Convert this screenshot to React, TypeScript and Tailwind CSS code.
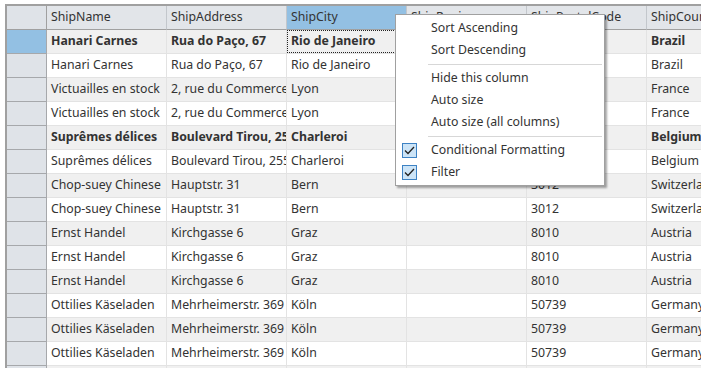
import React from "react";

const cols = ["ShipName", "ShipAddress", "ShipCity", "ShipRegion", "ShipPostalCode", "ShipCountry"];

type Row = { v: string[]; bold?: boolean };
const rows: Row[] = [
  { v: ["Hanari Carnes", "Rua do Paço, 67", "Rio de Janeiro", "", "", "Brazil"], bold: true },
  { v: ["Hanari Carnes", "Rua do Paço, 67", "Rio de Janeiro", "", "", "Brazil"] },
  { v: ["Victuailles en stock", "2, rue du Commerce", "Lyon", "", "", "France"] },
  { v: ["Victuailles en stock", "2, rue du Commerce", "Lyon", "", "", "France"] },
  { v: ["Suprêmes délices", "Boulevard Tirou, 255", "Charleroi", "", "", "Belgium"], bold: true },
  { v: ["Suprêmes délices", "Boulevard Tirou, 255", "Charleroi", "", "", "Belgium"] },
  { v: ["Chop-suey Chinese", "Hauptstr. 31", "Bern", "", "3012", "Switzerland"] },
  { v: ["Chop-suey Chinese", "Hauptstr. 31", "Bern", "", "3012", "Switzerland"] },
  { v: ["Ernst Handel", "Kirchgasse 6", "Graz", "", "8010", "Austria"] },
  { v: ["Ernst Handel", "Kirchgasse 6", "Graz", "", "8010", "Austria"] },
  { v: ["Ernst Handel", "Kirchgasse 6", "Graz", "", "8010", "Austria"] },
  { v: ["Ottilies Käseladen", "Mehrheimerstr. 369", "Köln", "", "50739", "Germany"] },
  { v: ["Ottilies Käseladen", "Mehrheimerstr. 369", "Köln", "", "50739", "Germany"] },
  { v: ["Ottilies Käseladen", "Mehrheimerstr. 369", "Köln", "", "50739", "Germany"] },
  { v: ["Ottilies Käseladen", "Mehrheimerstr. 369", "Köln", "", "50739", "Germany"] },
];

function Check() {
  return (
    <div className="w-[15px] h-[15px] border border-[#3d82c4] bg-[#cce4f7] flex items-center justify-center">
      <svg width="11" height="9" viewBox="0 0 11 9">
        <path d="M1 4.5 L4 7.5 L10 1" fill="none" stroke="#222" strokeWidth="1.3" />
      </svg>
    </div>
  );
}

function Item({ label, checked }: { label: string; checked?: boolean }) {
  return (
    <div className="h-[22px] flex items-center">
      <div className="w-[35px] pl-[6px] flex items-center">{checked ? <Check /> : null}</div>
      <span>{label}</span>
    </div>
  );
}

function Sep() {
  return (
    <div className="h-[6px] flex items-center">
      <div className="ml-[32px] mr-[2px] h-px flex-1 bg-[#d7d7d7]" />
    </div>
  );
}

export default function App() {
  return (
    <div
      className="relative w-[701px] h-[368px] overflow-hidden bg-white text-[12.3px] text-[#333333]"
      style={{ fontFamily: '"Noto Sans", "Open Sans", sans-serif' }}
    >
      <div className="pl-[5px] pt-[4px]">
        <div className="border-l-2 border-t-2 border-[#a0a0a0]">
          {/* header */}
          <div className="flex h-[24px] whitespace-nowrap">
            <div className="w-[40px] shrink-0 bg-[#dfe3e8] border-r border-b border-[#a0a0a0]" />
            {cols.map((c, i) => (
              <div
                key={c}
                className={`w-[120px] shrink-0 border-r border-b border-r-[#c3c7cc] border-b-[#a0a0a0] px-[4px] flex items-center overflow-hidden ${
                  i === 2 ? "bg-[#93c0e3]" : "bg-[#e2e5e9]"
                }`}
              >
                {c}
              </div>
            ))}
          </div>
          {rows.map((r, ri) => (
            <div key={ri} className={`flex h-[24px] whitespace-nowrap ${r.bold ? "font-bold" : ""}`}>
              <div
                className={`w-[40px] shrink-0 border-r border-b border-[#a6a8ab] ${
                  ri === 0 ? "bg-[#93c0e3]" : "bg-[#dfe3e8]"
                }`}
              />
              {r.v.map((v, ci) => (
                <div
                  key={ci}
                  className={`relative w-[120px] shrink-0 border-r border-b border-[#e3e3e3] pl-[4px] flex items-center overflow-hidden ${
                    ri % 2 === 0 ? "bg-[#f0f0f0]" : "bg-white"
                  }`}
                >
                  {v}
                  {ri === 0 && ci === 2 ? (
                    <div className="absolute inset-0 border border-dotted border-[#222]" />
                  ) : null}
                </div>
              ))}
            </div>
          ))}
        </div>
      </div>

      {/* context menu */}
      <div className="absolute left-[395px] top-[14px] w-[210px] bg-white border border-[#a0a0a0] py-[2px] shadow-[2px_2px_2px_rgba(0,0,0,0.35)]">
        <Item label="Sort Ascending" />
        <Item label="Sort Descending" />
        <Sep />
        <Item label="Hide this column" />
        <Item label="Auto size" />
        <Item label="Auto size (all columns)" />
        <Sep />
        <Item label="Conditional Formatting" checked />
        <Item label="Filter" checked />
      </div>
    </div>
  );
}
